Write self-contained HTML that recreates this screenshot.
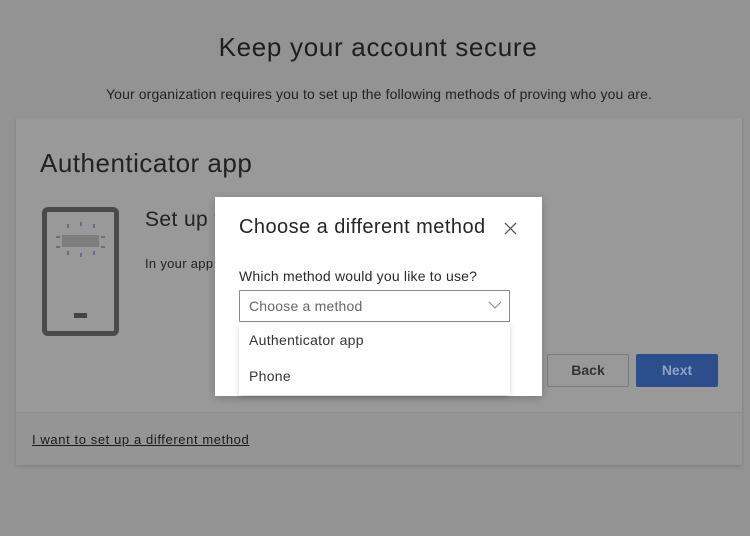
<!DOCTYPE html>
<html><head><meta charset="utf-8"><style>
*{margin:0;padding:0;box-sizing:border-box}
body{width:750px;height:536px;background:#939393;font-family:"Liberation Sans",sans-serif;color:#1b1b1b;position:relative;overflow:hidden}
.abs{position:absolute}
.t{position:absolute;width:2px;height:4px;background:#5d7090}
</style></head><body>
<div class="abs" style="left:0;top:32px;width:756px;text-align:center;font-size:26px;letter-spacing:0.7px;color:#1e1e1e">Keep your account secure</div>
<div class="abs" style="left:0;top:86px;width:758px;text-align:center;font-size:14px;letter-spacing:0.12px;color:#222">Your organization requires you to set up the following methods of proving who you are.</div>
<div class="abs" style="left:16px;top:118px;width:726px;height:347px;background:#999;box-shadow:0 1px 3px rgba(0,0,0,.15)"></div>
<div class="abs" style="left:16px;top:412px;width:726px;height:53px;background:#959595;border-top:1px solid #8c8c8c"></div>
<div class="abs" style="left:40px;top:148px;font-size:26px;letter-spacing:0.5px;color:#222">Authenticator app</div>
<div class="abs" style="left:42px;top:207px;width:77px;height:129px;border:5px solid #4a4a4a;border-radius:6px"></div>
<div class="abs" style="left:62px;top:235px;width:37px;height:12px;background:#7e7e7e"></div>
<div class="abs" style="left:74px;top:313px;width:13px;height:5px;background:#444"></div>
<div class="t" style="left:67px;top:224px"></div><div class="t" style="left:80px;top:222px"></div><div class="t" style="left:93px;top:224px"></div>
<div class="t" style="left:67px;top:251px"></div><div class="t" style="left:80px;top:253px"></div><div class="t" style="left:93px;top:251px"></div>
<div class="t" style="left:56px;top:236px;width:4px;height:2px"></div><div class="t" style="left:101px;top:236px;width:4px;height:2px"></div>
<div class="t" style="left:56px;top:246px;width:4px;height:2px"></div><div class="t" style="left:101px;top:246px;width:4px;height:2px"></div>
<div class="abs" style="left:145px;top:208px;font-size:21px;letter-spacing:0.4px;color:#222">Set up y</div>
<div class="abs" style="left:145px;top:256px;font-size:13px;letter-spacing:0.3px;color:#222">In your app</div>
<div class="abs" style="left:547px;top:354px;width:82px;height:33px;border:1px solid #7a7a7a;border-radius:2px;text-align:center;line-height:31px;font-size:14px;font-weight:bold;color:#333">Back</div>
<div class="abs" style="left:636px;top:354px;width:82px;height:33px;background:#2c4e8c;border-radius:2px;text-align:center;line-height:33px;font-size:14px;font-weight:bold;color:#8ea2c4">Next</div>
<div class="abs" style="left:32px;top:432px;font-size:13px;letter-spacing:0.6px;text-decoration:underline;color:#1a1a1a">I want to set up a different method</div>
<div class="abs" style="left:215px;top:197px;width:327px;height:199px;background:#fff;box-shadow:0 2px 8px rgba(0,0,0,.2)"></div>
<div class="abs" style="left:239px;top:216px;font-size:20px;letter-spacing:0.45px;color:#252525">Choose a different method</div>
<svg class="abs" style="left:504px;top:222px" width="13" height="13"><path d="M1 1L12 12M12 1L1 12" stroke="#555" stroke-width="1.3"/></svg>
<div class="abs" style="left:239px;top:268px;font-size:14px;letter-spacing:0.2px;color:#2a2a2a">Which method would you like to use?</div>
<div class="abs" style="left:239px;top:290px;width:271px;height:32px;border:1px solid #8a8a8a;border-radius:1px;font-size:14px;letter-spacing:0.2px;color:#666;padding-left:9px;line-height:30px">Choose a method</div>
<svg class="abs" style="left:488px;top:301px" width="14" height="9"><path d="M1 1L7 7L13 1" fill="none" stroke="#888" stroke-width="1.1"/></svg>
<div class="abs" style="left:239px;top:323px;width:271px;height:72px;background:#fff;box-shadow:0 2px 5px rgba(0,0,0,.18)"></div>
<div class="abs" style="left:249px;top:332px;font-size:14px;letter-spacing:0.3px;color:#333">Authenticator app</div>
<div class="abs" style="left:249px;top:368px;font-size:14px;letter-spacing:0.3px;color:#333">Phone</div>
</body></html>
